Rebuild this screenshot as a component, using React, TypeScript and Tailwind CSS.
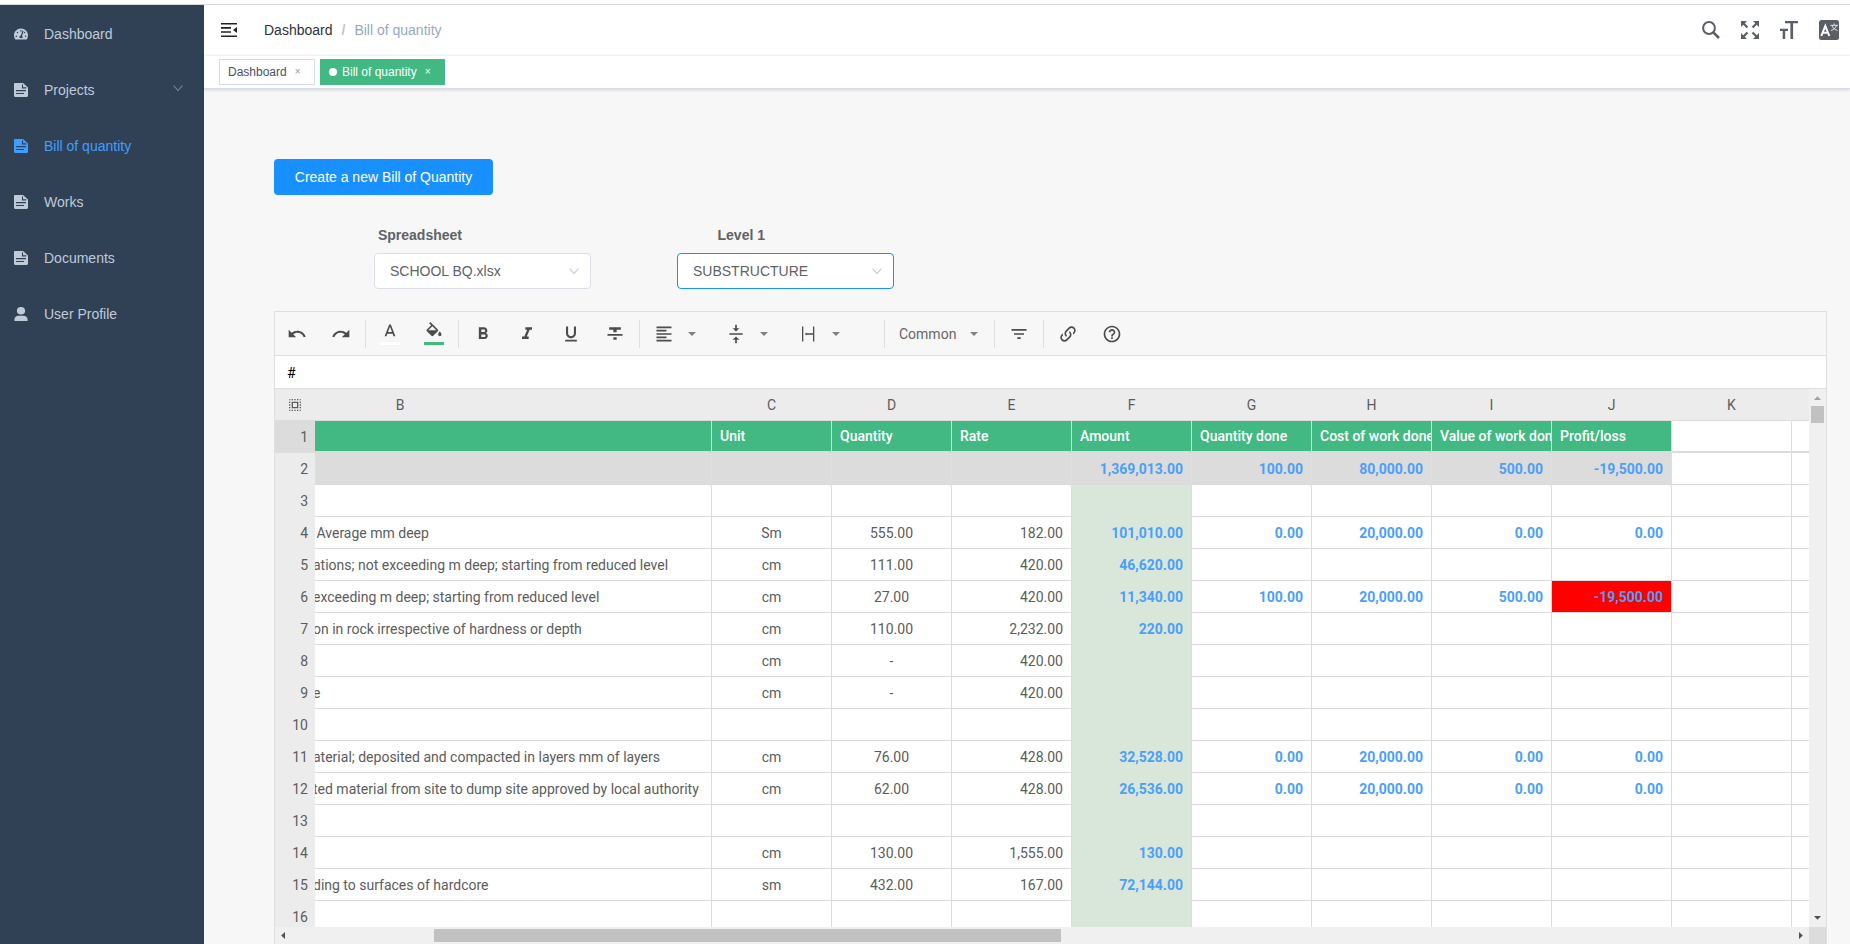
import type { ReactNode } from "react";
import { FaTachometerAlt } from "react-icons/fa";
import {
  MdFilterList,
  MdFormatAlignLeft,
  MdFormatBold,
  MdFormatItalic,
  MdFormatUnderlined,
  MdHelpOutline,
  MdFormatStrikethrough,
  MdSelectAll,
  MdVerticalAlignCenter,
} from "react-icons/md";

/* ---------- icons ---------- */

const DocIcon = () => (
  <svg width="14" height="14" viewBox="0 0 14 14" aria-hidden="true">
    <path fill="currentColor" d="M1.200 0H9l5 4.600v8.200c0 .7-.5 1.200-1.200 1.200H1.200C.5 14 0 13.500 0 12.800V1.200C0 .5.5 0 1.200 0Z" />
    <path fill="none" stroke="#304156" strokeWidth="1.100" d="M8.500 1.600v3.300h3.800M2 7.600h10M2 10.500h8" />
  </svg>
);

const UserIcon = () => (
  <svg width="14" height="14" viewBox="0 0 14 14" fill="currentColor" aria-hidden="true">
    <ellipse cx="7" cy="3.800" rx="4.100" ry="3.800" />
    <path d="M.3 13.300c0-3 1.700-4.600 4.200-4.600h5c2.500 0 4.200 1.600 4.200 4.600 0 .4-.2.700-.5.700H.8c-.3 0-.5-.3-.5-.7Z" />
  </svg>
);

const Chevron = ({ className }: { className: string }) => (
  <svg width="12" height="8" viewBox="0 0 12 8" fill="none" stroke="currentColor" className={className} aria-hidden="true">
    <path d="M1.500 1.500 6 6.500l4.500-5" strokeWidth="1.100" />
  </svg>
);

const Caret = () => (
  <svg width="8" height="4" viewBox="0 0 8 4" fill="#808080" aria-hidden="true">
    <path d="M0 0h8L4 4Z" />
  </svg>
);

const MdiIcon = ({ d, className }: { d: string; className?: string }) => (
  <svg width="20" height="20" viewBox="0 0 24 24" fill="currentColor" className={className} aria-hidden="true">
    <path d={d} />
  </svg>
);

const undoPath =
  "M12.500 8c-2.650 0-5.050 1-6.900 2.600L2 7v9h9l-3.620-3.620c1.390-1.160 3.160-1.880 5.120-1.880 3.540 0 6.550 2.310 7.600 5.500l2.370-.78C21.080 11.030 17.150 8 12.500 8z";
const textColorPath = "M9.620 12 12 5.670 14.370 12M11 3 5.500 17h2.250l1.120-3h6.250l1.130 3h2.250L13 3h-2Z";
const fillColorPath =
  "M19 11.500s-2 2.170-2 3.500a2 2 0 0 0 4 0c0-1.330-2-3.500-2-3.500M5.210 10 10 5.210 14.790 10M16.560 8.940 7.620 0 6.210 1.410l2.380 2.380-5.150 5.150c-.59.56-.59 1.530 0 2.120l5.500 5.500c.29.29.68.44 1.060.44s.77-.15 1.060-.44l5.500-5.500c.59-.59.59-1.560 0-2.120Z";
const linkPath =
  "M10.590 13.410C11 13.800 11 14.440 10.590 14.830C10.200 15.220 9.560 15.220 9.170 14.830C7.220 12.880 7.220 9.710 9.170 7.760L12.710 4.220C14.660 2.270 17.830 2.270 19.780 4.220C21.730 6.170 21.730 9.340 19.780 11.290L18.290 12.780C18.300 11.960 18.170 11.140 17.890 10.360L18.360 9.880C19.540 8.710 19.540 6.810 18.360 5.640C17.190 4.460 15.290 4.460 14.120 5.640L10.590 9.170C9.410 10.340 9.410 12.240 10.590 13.410M13.410 9.170C13.800 8.780 14.440 8.780 14.830 9.170C16.780 11.120 16.780 14.290 14.830 16.240L11.290 19.780C9.340 21.730 6.170 21.730 4.220 19.780C2.270 17.830 2.270 14.660 4.220 12.710L5.710 11.220C5.700 12.040 5.830 12.860 6.110 13.650L5.640 14.120C4.460 15.290 4.460 17.190 5.640 18.360C6.810 19.540 8.710 19.540 9.880 18.360L13.410 14.830C14.590 13.660 14.590 11.760 13.410 10.590C13 10.200 13 9.560 13.410 9.170Z";

const CollapseIcon = () => (
  <svg width="16" height="14" viewBox="0 0 16 14" fill="#222" aria-hidden="true">
    <path d="M0 0h16v1.600H0ZM0 4.100h10v1.600H0ZM0 8.200h10v1.600H0ZM0 12.400h16V14H0ZM16 4v6l-4-3Z" />
  </svg>
);

const SearchIcon = () => (
  <svg width="18" height="18" viewBox="0 0 18 18" fill="none" stroke="currentColor" aria-hidden="true">
    <circle cx="7" cy="7" r="5.900" strokeWidth="2" />
    <path d="m11.300 11.300 5.700 5.700" strokeWidth="2.600" />
  </svg>
);

const FullscreenIcon = () => (
  <svg width="18" height="18" viewBox="0 0 18 18" aria-hidden="true">
    <path fill="currentColor" d="M0 0h6L0 6ZM18 0h-6l6 6ZM0 18h6l-6-6ZM18 18h-6l6-6Z" />
    <path stroke="currentColor" strokeWidth="2.200" d="m1.500 1.500 5 5M16.500 1.500l-5 5M1.500 16.500l5-5M16.500 16.500l-5-5" />
  </svg>
);

const SizeIcon = () => (
  <svg width="18" height="18" viewBox="0 0 18 18" fill="currentColor" aria-hidden="true">
    <path d="M5 0h13v2.200h-4.900V18h-2.700V2.200H5ZM0 7.800h8V10H5.200v8H2.700v-8H0Z" />
  </svg>
);

const LanguageIcon = () => (
  <svg width="20" height="20" viewBox="0 0 20 20" aria-hidden="true">
    <rect width="20" height="20" rx="2.500" fill="currentColor" />
    <path d="m2.300 16 4-10 4 10M3.800 12.700h5" fill="none" stroke="#fff" strokeWidth="2" />
    <path d="M11.500 5.300h7.500M15.200 3.500v1.800M13 5.500c.6 2.300 2.500 4 5.500 5M17.500 5.500c-.6 2.300-2.500 4-5.500 5" fill="none" stroke="#fff" strokeWidth=".8" />
  </svg>
);

/* ---------- sidebar ---------- */

type NavItem = { label: string; icon: ReactNode; active?: boolean; expandable?: boolean };

const navItems: NavItem[] = [
  { label: "Dashboard", icon: <FaTachometerAlt size={14} /> },
  { label: "Projects", icon: <DocIcon />, expandable: true },
  { label: "Bill of quantity", icon: <DocIcon />, active: true },
  { label: "Works", icon: <DocIcon /> },
  { label: "Documents", icon: <DocIcon /> },
  { label: "User Profile", icon: <UserIcon /> },
];

const Sidebar = () => (
  <nav className="w-[204px] shrink-0 bg-[#304156]">
    {navItems.map((item) => (
      <a
        key={item.label}
        href="#"
        className={`flex h-14 items-center gap-4 pl-3.5 pr-5 pt-0.5 ${item.active ? "text-[#409eff]" : "text-[#bfcbd9]"}`}
      >
        {item.icon}
        <span className="grow">{item.label}</span>
        {item.expandable && <Chevron className="mb-1 text-[#7d8997]" />}
      </a>
    ))}
  </nav>
);

/* ---------- header ---------- */

const headerTools = [
  { label: "Search", icon: <SearchIcon /> },
  { label: "Fullscreen", icon: <FullscreenIcon /> },
  { label: "Text size", icon: <SizeIcon /> },
  { label: "Language", icon: <LanguageIcon /> },
];

const Header = () => (
  <header className="flex h-[50px] shrink-0 items-center bg-white pl-[17px] pr-[11px]">
    <button type="button" aria-label="Collapse sidebar">
      <CollapseIcon />
    </button>
    <nav className="ml-[27px] flex gap-[9px] text-[#303133]" aria-label="Breadcrumb">
      <a href="#">Dashboard</a>
      <span className="font-bold text-[#c0c4cc]">/</span>
      <span className="text-[#97a8be]">Bill of quantity</span>
    </nav>
    <div className="ml-auto flex items-center gap-[21px] text-[#5a5e66]">
      {headerTools.map((tool) => (
        <button key={tool.label} type="button" aria-label={tool.label}>
          {tool.icon}
        </button>
      ))}
    </div>
  </header>
);

const TagsBar = () => (
  <div className="z-10 flex h-[34px] shrink-0 items-center gap-[5px] border-t border-b border-t-[#f2f2f2] border-b-[#d8dce5] bg-white pl-[15px] text-xs shadow-[0_1px_3px_0_rgba(0,0,0,0.15)]">
    <div className="flex h-[26px] w-24 items-center border border-[#d8dce5] pl-2 text-[#495060]">
      <a href="#">Dashboard</a>
      <button type="button" aria-label="Close Dashboard" className="ml-2 text-[10px] text-[#999]">
        ×
      </button>
    </div>
    <div className="flex h-[26px] w-[125px] items-center bg-[#42b983] pl-[9px] text-white">
      <span className="mr-[5px] size-2 rounded-full bg-white" />
      <a href="#">Bill of quantity</a>
      <button type="button" aria-label="Close Bill of quantity" className="ml-2 text-[10px]">
        ×
      </button>
    </div>
  </div>
);

/* ---------- form ---------- */

const SelectField = ({ id, label, value, focused }: { id: string; label: string; value: string; focused?: boolean }) => (
  <div className="flex w-[217px] flex-col">
    <label htmlFor={id} className="h-9 w-[100px] pr-3 text-right font-bold leading-9 text-[#606266]">
      {label}
    </label>
    <div className="relative">
      <select
        id={id}
        className={`h-9 w-full appearance-none rounded border bg-white px-[15px] text-[#606266] outline-none ${focused ? "border-[#1890ff]" : "border-[#dcdfe6]"}`}
      >
        <option>{value}</option>
      </select>
      <Chevron className="pointer-events-none absolute right-[11px] top-3.5 text-[#c0c4cc]" />
    </div>
  </div>
);

/* ---------- spreadsheet ---------- */

const ToolButton = ({ label, children }: { label: string; children: ReactNode }) => (
  <button type="button" aria-label={label} className="flex h-full w-11 flex-col items-center justify-center">
    {children}
  </button>
);

const MenuButton = ({ label, children }: { label: string; children: ReactNode }) => (
  <button type="button" aria-label={label} className="flex h-full w-[72px] items-center gap-3.5 pl-3">
    {children}
    <Caret />
  </button>
);

const Separator = () => <span className="mx-0.5 h-7 w-px bg-[#dfdfdf]" />;

const Toolbar = () => (
  <div className="flex h-11 shrink-0 items-center border-b border-[#dfdfdf] bg-[#f7f7f7] text-[#4c4c4c]" role="toolbar">
    <ToolButton label="Undo">
      <MdiIcon d={undoPath} />
    </ToolButton>
    <ToolButton label="Redo">
      <MdiIcon d={undoPath} className="-scale-x-100" />
    </ToolButton>
    <Separator />
    <ToolButton label="Text color">
      <MdiIcon d={textColorPath} />
      <span className="h-[3px] w-5 bg-white" />
    </ToolButton>
    <ToolButton label="Background color">
      <MdiIcon d={fillColorPath} />
      <span className="h-[3px] w-5 bg-[#42b983]" />
    </ToolButton>
    <Separator />
    <ToolButton label="Bold">
      <MdFormatBold size={20} />
    </ToolButton>
    <ToolButton label="Italic">
      <MdFormatItalic size={20} />
    </ToolButton>
    <ToolButton label="Underline">
      <MdFormatUnderlined size={20} />
    </ToolButton>
    <ToolButton label="Strikethrough">
      <MdFormatStrikethrough size={20} />
    </ToolButton>
    <Separator />
    <MenuButton label="Horizontal align">
      <MdFormatAlignLeft size={20} />
    </MenuButton>
    <MenuButton label="Vertical align">
      <MdVerticalAlignCenter size={20} />
    </MenuButton>
    <MenuButton label="Text overflow">
      <svg width="20" height="20" viewBox="0 0 20 20" fill="currentColor" aria-hidden="true">
        <path d="M4 2.500h1.300v15H4ZM15 2.500h1.300v15H15ZM8 9.300h7v1.500H8ZM6.800 10l1.700-1.500v3Z" />
      </svg>
    </MenuButton>
    <span className="w-6" />
    <Separator />
    <button type="button" className="flex h-full w-[105px] items-center justify-between pl-3 pr-3.5 text-[#666]">
      Common
      <Caret />
    </button>
    <Separator />
    <ToolButton label="Filter">
      <MdFilterList size={20} />
    </ToolButton>
    <Separator />
    <ToolButton label="Link">
      <MdiIcon d={linkPath} />
    </ToolButton>
    <ToolButton label="Help">
      <MdHelpOutline size={20} />
    </ToolButton>
  </div>
);

const columns = ["C", "D", "E", "F", "G", "H", "I", "J", "K"];
const titles = ["Unit", "Quantity", "Rate", "Amount", "Quantity done", "Cost of work done", "Value of work done", "Profit/loss"];

type Row = { b?: string; cells?: string[] };

const rows: Row[] = [
  {},
  { b: " Average mm deep", cells: ["Sm", "555.00", "182.00", "101,010.00", "0.00", "20,000.00", "0.00", "0.00"] },
  { b: "ations; not exceeding m deep; starting from reduced level", cells: ["cm", "111.00", "420.00", "46,620.00"] },
  { b: "exceeding m deep; starting from reduced level", cells: ["cm", "27.00", "420.00", "11,340.00", "100.00", "20,000.00", "500.00", "-19,500.00"] },
  { b: "on in rock irrespective of hardness or depth", cells: ["cm", "110.00", "2,232.00", "220.00"] },
  { cells: ["cm", "-", "420.00"] },
  { b: "e", cells: ["cm", "-", "420.00"] },
  {},
  { b: "aterial; deposited and compacted in layers mm of layers", cells: ["cm", "76.00", "428.00", "32,528.00", "0.00", "20,000.00", "0.00", "0.00"] },
  { b: "ted material from site to dump site approved by local authority", cells: ["cm", "62.00", "428.00", "26,536.00", "0.00", "20,000.00", "0.00", "0.00"] },
  {},
  { cells: ["cm", "130.00", "1,555.00", "130.00"] },
  { b: "ding to surfaces of hardcore", cells: ["sm", "432.00", "167.00", "72,144.00"] },
  {},
];

const totals = ["", "", "", "1,369,013.00", "100.00", "80,000.00", "500.00", "-19,500.00"];

const cellClass = (index: number, value: string) => {
  if (index < 2) return "border-[#dcdcdc] text-center";
  if (index === 2) return "border-[#dcdcdc] text-right";
  if (index === 3) return "border-r-[#dcdcdc] border-b-[#d9e7db] bg-[#d9e7db] text-right font-bold text-[#4b9ffa]";
  if (value.startsWith("-")) return "border-[#dcdcdc] bg-[#ff0000] text-right font-bold text-[#4b9ffa]";
  return "border-[#dcdcdc] text-right font-bold text-[#4b9ffa]";
};

const Grid = () => (
  <table className="w-full table-fixed border-separate border-spacing-0 whitespace-nowrap text-[#5c5c5c]">
    <colgroup>
      <col className="w-10" />
      <col className="w-[397px]" />
      {columns.map((c) => (
        <col key={c} className="w-[120px]" />
      ))}
      <col />
    </colgroup>
    <thead>
      <tr className="h-8 bg-[#ececec]">
        <th className="border-b border-[#dcdcdc] p-0">
          <MdSelectAll size={16} className="ml-3" />
        </th>
        <th className="border-b border-[#dcdcdc] p-0 font-normal">
          <span className="block w-[170px] text-center">B</span>
        </th>
        {columns.map((c) => (
          <th key={c} className="border-r border-b border-r-transparent border-b-[#dcdcdc] p-0 text-center font-normal">
            {c}
          </th>
        ))}
        <th className="border-b border-[#dcdcdc] p-0" />
      </tr>
    </thead>
    <tbody>
      <tr className="h-8">
        <th className="bg-[#dcdcdc] p-0 pr-[7px] text-right font-normal">1</th>
        <td className="border-r border-b-2 border-[#dcdcdc] bg-[#42b983] bg-clip-padding p-0" />
        {titles.map((t) => (
          <td key={t} className="overflow-hidden border-r border-b-2 border-[#dcdcdc] bg-[#42b983] bg-clip-padding p-0 pl-2 font-medium text-white">
            {t}
          </td>
        ))}
        <td className="border-r border-b-2 border-[#dcdcdc] p-0" />
        <td className="border-b-2 border-[#dcdcdc] p-0" />
      </tr>
      <tr className="h-8">
        <th className="bg-[#ececec] p-0 pr-[7px] text-right font-normal">2</th>
        <td className="border-r border-b border-r-[#e0e0e0] border-b-[#dcdcdc] bg-[#dcdcdc] p-0" />
        {totals.map((t, i) => (
          <td key={titles[i]} className="border-r border-b border-r-[#e0e0e0] border-b-[#dcdcdc] bg-[#dcdcdc] p-0 pr-2 text-right font-bold text-[#4b9ffa]">
            {t}
          </td>
        ))}
        <td className="border-r border-b border-[#dcdcdc] p-0" />
        <td className="border-b border-[#dcdcdc] p-0" />
      </tr>
      {rows.map((row, r) => (
        <tr key={r} className="h-8">
          <th className="bg-[#ececec] p-0 pr-[7px] text-right font-normal">{r + 3}</th>
          <td className="overflow-hidden whitespace-pre border-r border-b border-[#dcdcdc] p-0">
            <span className="-ml-0.5">{row.b}</span>
          </td>
          {titles.map((t, i) => {
            const value = row.cells?.[i] ?? "";
            return (
              <td key={t} className={`border-r border-b bg-clip-padding p-0 px-2 ${cellClass(i, value)}`}>
                {value}
              </td>
            );
          })}
          <td className="border-r border-b border-[#dcdcdc] p-0" />
          <td className="border-b border-[#dcdcdc] p-0" />
        </tr>
      ))}
    </tbody>
  </table>
);

const VerticalScrollbar = () => (
  <div className="flex w-[17px] shrink-0 flex-col items-center bg-[#f0f0f0]">
    <svg width="17" height="17" viewBox="0 0 17 17" fill="#a0a0a0" aria-hidden="true">
      <path d="M5 11h7L8.500 7.200Z" />
    </svg>
    <span className="h-[17px] w-[13px] bg-[#c1c1c1]" />
    <svg width="17" height="17" viewBox="0 0 17 17" fill="#505050" className="mt-auto" aria-hidden="true">
      <path d="M5 6h7L8.500 9.800Z" />
    </svg>
  </div>
);

const HorizontalScrollbar = () => (
  <div className="flex h-[17px] shrink-0 items-center bg-[#f0f0f0]">
    <svg width="17" height="17" viewBox="0 0 17 17" fill="#505050" aria-hidden="true">
      <path d="M10 5v7L6.200 8.500Z" />
    </svg>
    <div className="grow px-[142px]">
      <div className="h-[13px] w-[51.600%] bg-[#c1c1c1]" />
    </div>
    <svg width="17" height="17" viewBox="0 0 17 17" fill="#505050" aria-hidden="true">
      <path d="M7 5v7l3.800-3.500Z" />
    </svg>
    <span className="h-full w-[17px] bg-[#dcdcdc]" />
  </div>
);

const Spreadsheet = () => (
  <section className="mt-[22px] flex min-h-0 grow flex-col border border-b-0 border-[#dfdfdf] bg-white font-['Roboto',sans-serif]">
    <Toolbar />
    <input
      aria-label="Formula"
      defaultValue="#"
      className="h-[33px] w-full shrink-0 border-b border-[#dfdfdf] bg-white px-3 pt-0.5 text-black outline-none"
    />
    <div className="flex min-h-0 grow">
      <div className="min-w-0 grow overflow-hidden">
        <Grid />
      </div>
      <VerticalScrollbar />
    </div>
    <HorizontalScrollbar />
  </section>
);

export default function App() {
  return (
    <div className="flex h-screen flex-col bg-white font-['Liberation_Sans',Arial,sans-serif] text-sm">
      <div className="h-[5px] shrink-0 border-b border-[#dadada]" />
      <div className="flex min-h-0 grow">
        <Sidebar />
        <div className="flex min-w-0 grow flex-col bg-[#f7f7f7]">
          <Header />
          <TagsBar />
          <main className="flex min-h-0 grow flex-col pl-[70px] pr-[23px] pt-[70px]">
            <button type="button" className="h-9 w-[219px] shrink-0 rounded bg-[#1890ff] text-white">
              Create a new Bill of Quantity
            </button>
            <form className="mt-[22px] flex shrink-0 gap-[86px] pl-[100px]">
              <SelectField id="spreadsheet" label="Spreadsheet" value="SCHOOL BQ.xlsx" />
              <SelectField id="level-1" label="Level 1" value="SUBSTRUCTURE" focused />
            </form>
            <Spreadsheet />
          </main>
        </div>
      </div>
    </div>
  );
}
